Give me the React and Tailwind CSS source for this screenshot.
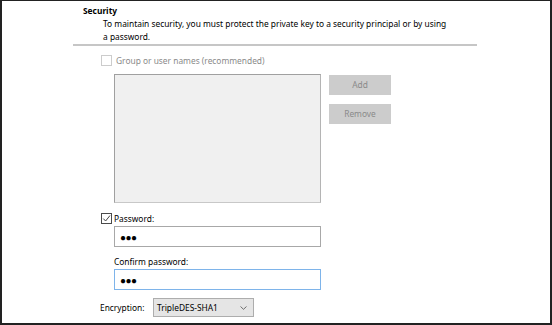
import React from "react";

function CheckBox({ checked, disabled }) {
  return (
    <div
      className={`w-[11px] h-[11px] border bg-white flex items-center justify-center shrink-0 ${
        disabled ? "border-[#cccccc]" : "border-[#4a4a4a]"
      }`}
    >
      {checked && (
        <svg width="9" height="9" viewBox="0 0 9 9">
          <path d="M1.3 4.6 L3.6 7 L8 1.5" fill="none" stroke="#444" strokeWidth="1" />
        </svg>
      )}
    </div>
  );
}

function App() {
  return (
    <div
      className="w-[552px] h-[325px] bg-white border-t border-l-2 border-r-2 border-b-2 border-[#222222] text-[8.4px] leading-[12px] text-black overflow-hidden"
      style={{ fontFamily: '"Noto Sans", "Open Sans", Arial, sans-serif' }}
    >
      {/* header */}
      <div className="pl-[81px] pt-[3px] leading-[13px]">
        <div className="font-bold">Security</div>
        <div className="pl-[20px]">
          To maintain security, you must protect the private key to a security principal or by using
          <br />
          a password.
        </div>
      </div>
      <div className="ml-[71px] mt-[1px] w-[404px] h-[2px] bg-[#c6c6c6]" />

      {/* group or user names */}
      <div className="ml-[99px] mt-[9px] h-[11px] flex items-center gap-[4px] text-[#8a8a8a]">
        <CheckBox disabled />
        <span>Group or user names (recommended)</span>
      </div>
      <div className="ml-[112px] mt-[8px] flex gap-[8px]">
        <div className="w-[207px] h-[129px] bg-[#f0f0f0] border border-[#a0a0a0] border-b-[#c8c8c8] border-r-[#b4b4b4]" />
        <div className="flex flex-col gap-[9px] pt-[1px]">
          <div className="w-[62px] h-[20px] bg-[#cccccc] text-[#8a8a8a] flex items-center justify-center">
            Add
          </div>
          <div className="w-[62px] h-[20px] bg-[#cccccc] text-[#8a8a8a] flex items-center justify-center">
            Remove
          </div>
        </div>
      </div>

      {/* password */}
      <div className="ml-[99px] mt-[10px] h-[11px] flex items-center gap-[2px]">
        <CheckBox checked />
        <span>Password:</span>
      </div>
      <div className="ml-[112px] mt-[2px] w-[207px] h-[21px] border border-[#a8a8a8] flex items-center pl-[5px] text-[10px] tracking-[-0.5px]">
        ●●●
      </div>
      <div className="ml-[112px] mt-[8px] leading-[13px]">Confirm password:</div>
      <div className="ml-[112px] mt-[1px] w-[207px] h-[21px] border border-[#7eb4ea] flex items-center pl-[5px] text-[10px] tracking-[-0.5px]">
        ●●●
      </div>

      {/* encryption */}
      <div className="ml-[98px] mt-[8px] flex items-center">
        <span className="w-[53px]">Encryption:</span>
        <div className="w-[101px] h-[19px] bg-[#e5e5e5] border border-[#adadad] flex items-center justify-between pl-[3px] pr-[6px]">
          <span>TripleDES-SHA1</span>
          <svg width="7" height="4" viewBox="0 0 7 4">
            <path d="M0.5 0.5 L3.5 3.3 L6.5 0.5" fill="none" stroke="#606060" strokeWidth="0.9" />
          </svg>
        </div>
      </div>
    </div>
  );
}

export default App;
